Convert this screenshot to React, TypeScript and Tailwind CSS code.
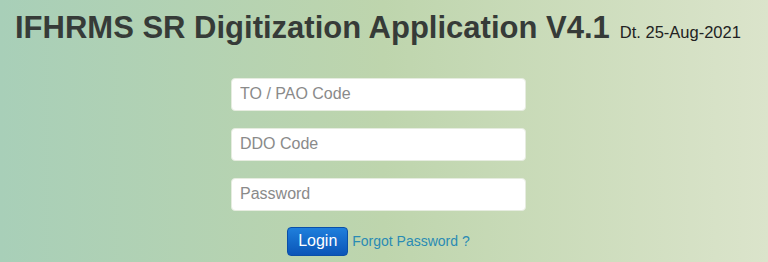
import { useState } from 'react';

export default function App() {
  const [toCode, setToCode] = useState('');
  const [ddoCode, setDdoCode] = useState('');
  const [password, setPassword] = useState('');

  return (
    <div
      className="w-full h-[262px] overflow-hidden bg-gradient-to-r from-[#a8cfb8] via-[#bed5ad] to-[#dbe4cb]"
      style={{ fontFamily: '"Liberation Sans", Arial, sans-serif' }}
    >
      {/* Header */}
      <div className="flex items-baseline pl-[15px] pt-[12px]">
        <h1 className="text-[31px] leading-[31px] font-bold text-[#363b38]">
          IFHRMS SR Digitization Application V4.1
        </h1>
        <span className="ml-[10px] text-[16.5px] text-[#222]">Dt. 25-Aug-2021</span>
      </div>

      {/* Login form */}
      <form
        className="ml-[231px] mt-[33px] w-[295px] flex flex-col gap-[17px]"
        onSubmit={(e) => e.preventDefault()}
      >
        <input
          value={toCode}
          onChange={(e) => setToCode(e.target.value)}
          placeholder="TO / PAO Code"
          className="h-[33px] w-full rounded-[4px] bg-white border border-[#e6ece0] px-[8px] text-[16px] text-[#333] placeholder:text-[#8a8a8a] outline-none"
        />
        <input
          value={ddoCode}
          onChange={(e) => setDdoCode(e.target.value)}
          placeholder="DDO Code"
          className="h-[33px] w-full rounded-[4px] bg-white border border-[#e6ece0] px-[8px] text-[16px] text-[#333] placeholder:text-[#8a8a8a] outline-none"
        />
        <input
          type="password"
          value={password}
          onChange={(e) => setPassword(e.target.value)}
          placeholder="Password"
          className="h-[33px] w-full rounded-[4px] bg-white border border-[#e6ece0] px-[8px] text-[16px] text-[#333] placeholder:text-[#8a8a8a] outline-none"
        />
        <div className="flex items-center justify-center gap-[4px] -mt-[1px]">
          <button
            type="submit"
            className="h-[29px] w-[61px] rounded-[4px] bg-gradient-to-b from-[#1f7fdc] to-[#0b55b8] border border-[#0a4fa8] text-white text-[16px] leading-none"
          >
            Login
          </button>
          <a href="#" className="text-[14px] text-[#2a8bb4]">
            Forgot Password ?
          </a>
        </div>
      </form>
    </div>
  );
}
